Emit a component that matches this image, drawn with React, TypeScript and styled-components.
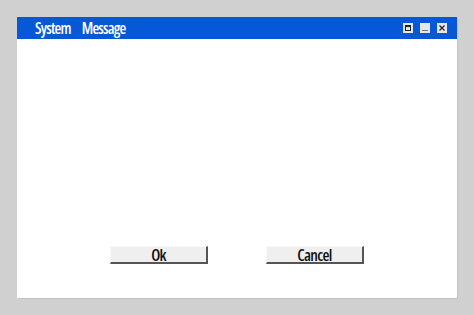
import React from "react";
import styled, { createGlobalStyle } from "styled-components";

const GlobalStyle = createGlobalStyle`
  html, body {
    margin: 0;
    padding: 0;
    background: #d0d0d0;
  }
  body {
    width: 474px;
    height: 315px;
    overflow: hidden;
    font-family: "Open Sans", "DejaVu Sans Condensed", sans-serif;
  }
`;

const Page = styled.div`
  width: 474px;
  height: 315px;
  padding: 17px;
  box-sizing: border-box;
  display: flex;
`;

const Window = styled.div`
  width: 440px;
  height: 281px;
  background: #ffffff;
  display: flex;
  flex-direction: column;
  box-shadow: 1px 1px 0 #c4c4c4;
`;

const TitleBar = styled.div`
  height: 22px;
  background: #0758d6;
  display: flex;
  align-items: center;
  padding: 0 10px 0 18px;
  box-sizing: border-box;
`;

const Title = styled.div`
  display: flex;
  gap: 11px;
  color: #ffffff;
  font-family: "Open Sans", "DejaVu Sans Condensed", sans-serif;
  font-stretch: 75%;
  font-weight: 600;
  font-size: 15.5px;
  letter-spacing: -0.8px;
  line-height: 22px;
  flex: 1;
  margin-top: -1px;
`;

const Controls = styled.div`
  display: flex;
  gap: 7px;
  align-items: center;
`;

const ControlButton = styled.div`
  width: 10px;
  height: 10px;
  background: #e6e6e6;
  display: flex;
  align-items: center;
  justify-content: center;
  svg {
    display: block;
  }
`;

const Body = styled.div`
  flex: 1;
  display: flex;
  align-items: flex-end;
  justify-content: center;
  gap: 58px;
  padding-bottom: 34px;
`;

const Button = styled.button`
  width: 98px;
  height: 18px;
  padding: 0;
  margin: 0;
  background: #efefef;
  border-style: solid;
  border-width: 1px 2px 2px 1px;
  border-color: #f8f8f8 #555555 #555555 #f8f8f8;
  font-family: "Open Sans", "DejaVu Sans Condensed", sans-serif;
  font-stretch: 75%;
  font-weight: 600;
  font-size: 16px;
  letter-spacing: -0.7px;
  line-height: 16px;
  color: #111111;
  display: flex;
  align-items: center;
  justify-content: center;
  box-sizing: border-box;
`;

export default function App() {
  return (
    <>
      <GlobalStyle />
      <Page>
        <Window>
          <TitleBar>
            <Title>
              <span>System</span>
              <span>Message</span>
            </Title>
            <Controls>
              <ControlButton>
                <svg width="8" height="8" viewBox="0 0 8 8">
                  <rect x="1.5" y="1.5" width="5" height="5" fill="none" stroke="#222" strokeWidth="1" />
                  <rect x="1" y="1" width="6" height="2" fill="#222" />
                </svg>
              </ControlButton>
              <ControlButton>
                <svg width="8" height="8" viewBox="0 0 8 8">
                  <rect x="1" y="6" width="6" height="1" fill="#777" />
                </svg>
              </ControlButton>
              <ControlButton>
                <svg width="8" height="8" viewBox="0 0 8 8">
                  <path d="M1.5 1.5 L6.5 6.5 M6.5 1.5 L1.5 6.5" stroke="#222" strokeWidth="1.2" />
                </svg>
              </ControlButton>
            </Controls>
          </TitleBar>
          <Body>
            <Button>Ok</Button>
            <Button>Cancel</Button>
          </Body>
        </Window>
      </Page>
    </>
  );
}
